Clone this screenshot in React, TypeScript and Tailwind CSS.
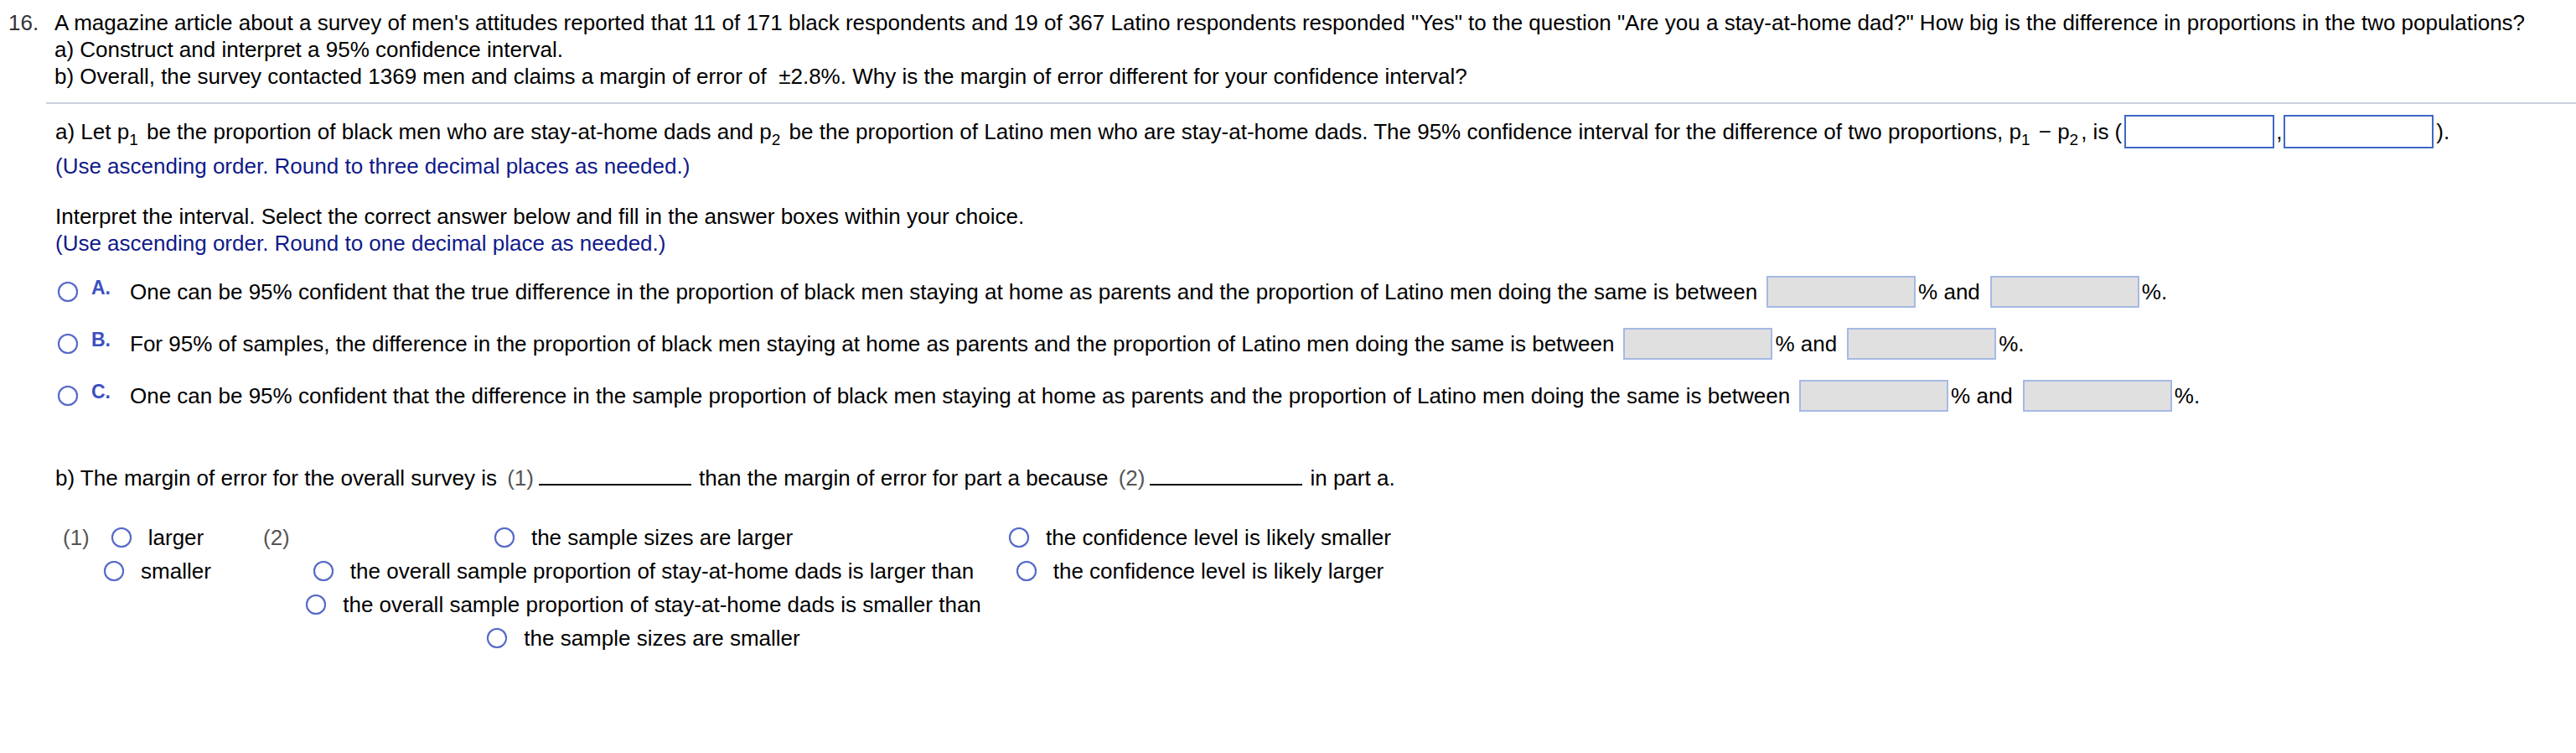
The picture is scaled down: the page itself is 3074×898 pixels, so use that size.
import React from "react";

const Radio = () => (
  <span className="inline-block w-[24px] h-[24px] rounded-full border-[2.5px] border-[#5468c8] shrink-0 bg-white shadow-[0_0_1px_#9aa6e0]" />
);

const GrayBox = () => (
  <span className="inline-block w-[178px] h-[38px] bg-[#e0e0e0] border-2 border-[#a6b9e4] shrink-0" />
);

const BlueBox = () => (
  <span className="inline-block w-[179px] h-[40px] bg-white border-2 border-[#3f67c7] shrink-0" />
);

const Blank = () => (
  <span className="inline-block w-[182px] h-[10px] border-b-2 border-black ml-[6px] mr-[9px]" />
);

const Sub = ({ children }: { children: React.ReactNode }) => (
  <sub className="text-[19px] -bottom-[7px] mr-[3px]">{children}</sub>
);

function Option({ letter, text, boxes }: { letter: string; text: string; boxes?: boolean }) {
  return (
    <div className="flex items-center h-[38px] pl-[3px]">
      <Radio />
      <span className="ml-[16px] w-[46px] text-[23px] font-bold text-[#3b4fbf] relative -top-[5px]">{letter}</span>
      <span className="whitespace-pre">{text}</span>
      {boxes && (
        <>
          <span className="ml-[11px]" />
          <GrayBox />
          <span className="ml-[3px] whitespace-pre">% and</span>
          <span className="ml-[12px]" />
          <GrayBox />
          <span className="ml-[3px]">%.</span>
        </>
      )}
    </div>
  );
}

function Choice({ label }: { label: string }) {
  return (
    <div className="flex items-center h-[40px]">
      <Radio />
      <span className="ml-[20px] whitespace-pre">{label}</span>
    </div>
  );
}

export default function App() {
  return (
    <div
      className="w-[3074px] h-[898px] bg-white text-black text-[26px] leading-[32px] overflow-hidden"
      style={{ fontFamily: '"Liberation Sans", Arial, sans-serif' }}
    >
      {/* Question header */}
      <div className="flex pt-[11px] pl-[10px]">
        <div className="w-[55px] text-[#333333]">16.</div>
        <div>
          <div>
            A magazine article about a survey of men's attitudes reported that 11 of 171 black respondents and 19 of 367 Latino respondents responded "Yes" to the question "Are you a stay-at-home dad?" How big is the difference in proportions in the two populations?
          </div>
          <div>a) Construct and interpret a 95% confidence interval.</div>
          <div>b) Overall, the survey contacted 1369 men and claims a margin of error of {"\u00A0"}±2.8%. Why is the margin of error different for your confidence interval?</div>
        </div>
      </div>

      {/* Separator */}
      <div className="mt-[15px] ml-[55px] h-[2px] bg-[#cdd1dd]" />

      <div className="pl-[66px]">
        {/* Part a */}
        <div className="mt-[13px] flex items-center h-[40px]">
          <span className="whitespace-pre">
            a) Let p<Sub>1</Sub> be the proportion of black men who are stay-at-home dads and p<Sub>2</Sub> be the proportion of Latino men who are stay-at-home dads. The 95% confidence interval for the difference of two proportions, p<Sub>1</Sub> − p<Sub>2</Sub>, is (
          </span>
          <span className="ml-[3px]" />
          <BlueBox />
          <span className="w-[11px] text-center">,</span>
          <BlueBox />
          <span className="ml-[3px]">).</span>
        </div>
        <div className="mt-[5px] text-[#101a8a]">(Use ascending order. Round to three decimal places as needed.)</div>

        <div className="mt-[28px]">Interpret the interval. Select the correct answer below and fill in the answer boxes within your choice.</div>
        <div className="text-[#101a8a]">(Use ascending order. Round to one decimal place as needed.)</div>

        <div className="mt-[23px] flex flex-col gap-[24px]">
          <Option
            letter="A."
            text="One can be 95% confident that the true difference in the proportion of black men staying at home as parents and the proportion of Latino men doing the same is between"
            boxes
          />
          <Option
            letter="B."
            text="For 95% of samples, the difference in the proportion of black men staying at home as parents and the proportion of Latino men doing the same is between"
            boxes
          />
          <Option
            letter="C."
            text="One can be 95% confident that the difference in the sample proportion of black men staying at home as parents and the proportion of Latino men doing the same is between"
            boxes
          />
        </div>

        {/* Part b */}
        <div className="mt-[63px] whitespace-pre">
          b) The margin of error for the overall survey is <span className="ml-[5px] text-[#555555]">(1)</span>
          <Blank />
          than the margin of error for part a because <span className="ml-[5px] text-[#555555]">(2)</span>
          <Blank />
          in part a.
        </div>
      </div>

      <div className="mt-[35px] flex pl-[75px]">
        <div className="w-[38px] h-[40px] flex items-center text-[#555555]">(1)</div>
        <div className="w-[150px] flex flex-col items-center">
          <Choice label="larger" />
          <Choice label="smaller" />
        </div>
        <div className="ml-[51px] w-[41px] h-[40px] flex items-center text-[#555555]">(2)</div>
        <div className="w-[826px] flex flex-col items-center">
          <Choice label="the sample sizes are larger" />
          <Choice label="the overall sample proportion of stay-at-home dads is larger than" />
          <Choice label="the overall sample proportion of stay-at-home dads is smaller than" />
          <Choice label="the sample sizes are smaller" />
        </div>
        <div className="ml-[9px] w-[484px] flex flex-col items-center">
          <Choice label="the confidence level is likely smaller" />
          <Choice label="the confidence level is likely larger" />
        </div>
      </div>
    </div>
  );
}
